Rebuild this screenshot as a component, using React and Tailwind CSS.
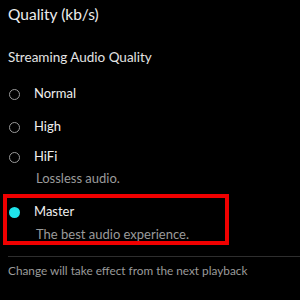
const options = [
  { label: 'Normal', top: 'mt-[19px]' },
  { label: 'High', top: 'mt-[15px]' },
  { label: 'HiFi', top: 'mt-[12px]', sub: 'Lossless audio.' },
]

function Radio({ checked }) {
  return checked ? (
    <span className="ml-px w-[11px] h-[11px] rounded-full bg-[#1fe3ea] shrink-0" />
  ) : (
    <span className="ml-px w-[11px] h-[11px] rounded-full border-[1.5px] border-[#9a9a9a] shrink-0" />
  )
}

export default function App() {
  return (
    <div className="relative w-[300px] h-[300px] bg-black overflow-hidden font-['Lato',sans-serif]">
      <div className="flex flex-col pl-2">
        <h1 className="pt-[4px] text-[15.5px] leading-[20px] text-[#ececec]">Quality (kb/s)</h1>
        <p className="mt-[24px] text-[13.5px] leading-[18px] text-[#e4e4e4]">Streaming Audio Quality</p>

        {options.map((o) => (
          <div key={o.label} className={o.top}>
            <div className="flex items-center h-[18px]">
              <Radio />
              <span className="ml-[14px] text-[13px] text-[#f0f0f0]">{o.label}</span>
            </div>
            {o.sub && (
              <p className="ml-[28px] mt-[4px] text-[13px] leading-[16px] text-[#9b9b9b]">{o.sub}</p>
            )}
          </div>
        ))}

        <div className="mt-[17px]">
          <div className="flex items-center h-[18px]">
            <Radio checked />
            <span className="ml-[14px] text-[13px] text-[#f0f0f0]">Master</span>
          </div>
          <p className="ml-[28px] mt-[5px] text-[13px] leading-[16px] text-[#9b9b9b]">The best audio experience.</p>
        </div>

        <div className="mt-[14px] h-px bg-[#2e2e2e]" />
        <p className="mt-[7px] text-[11.8px] leading-[14px] text-[#9b9b9b]">Change will take effect from the next playback</p>
      </div>

      <div className="absolute left-[3px] top-[194px] w-[226px] h-[51px] border-[4px] border-[#f00000]" />
    </div>
  )
}
